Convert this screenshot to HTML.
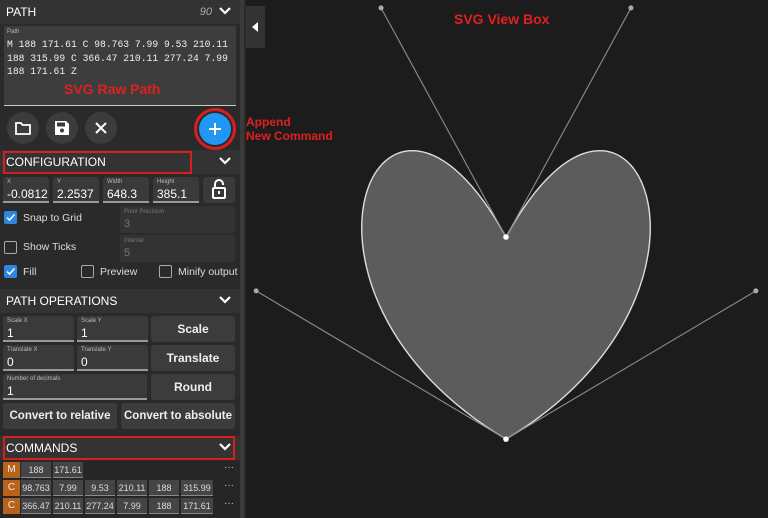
<!DOCTYPE html>
<html><head><style>
*{margin:0;padding:0;box-sizing:border-box}
body{width:768px;height:518px;overflow:hidden;background:#1c1c1c;font-family:"Liberation Sans",sans-serif;color:#fff;position:relative}
.a{position:absolute}
#side{left:0;top:0;width:240px;height:518px;background:#2a2a2a;overflow:hidden}
.hdr{background:#333;height:24px;font-size:12px;line-height:24px;padding-left:6px;width:240px;left:0}
.chev{right:8px;top:4px;width:14px;height:14px}
.inp{background:#3a3a3a;border-bottom:2px solid #999;border-radius:3px 3px 0 0}
.inp .l{font-size:6px;color:#bbb;position:absolute;left:4px;top:2px}
.inp .v{font-size:12px;color:#fff;position:absolute;left:4px;top:10px}
.btn{background:#3c3c3c;border-radius:3px;font-size:12px;font-weight:bold;color:#eee;text-align:center;white-space:nowrap}
.cb{width:13px;height:13px;border:1px solid #aaa;border-radius:2px}
.cb.on{background:#2e86de;border:none}
.lbl{font-size:10.5px;color:#ddd;white-space:nowrap}
.cell{background:#454545;font-size:9px;color:#ddd;text-align:center;height:16px;line-height:16px;border-bottom:1px solid #888}
.cmd{background:#b8621b;font-size:10px;color:#eee;text-align:center;width:17px;height:16px;line-height:16px}
.red{color:#e02020;font-weight:bold}
</style></head><body>
<div id="side" class="a">
<div class="a hdr" style="top:0">PATH<span class="a" style="right:28px;font-style:italic;color:#aaa;font-size:11px">90</span>
<svg class="a chev" viewBox="0 0 14 14"><path d="M2 4l5 5 5-5" stroke="#fff" stroke-width="2.2" fill="none"/></svg></div>
<div class="a" style="left:4px;top:26px;width:232px;height:80px;background:#3d3d3d;border-bottom:1px solid #ccc;overflow:hidden">
<div class="a" style="left:3px;top:3px;font-size:6px;color:#bbb">Path</div>
<div class="a" style="left:3px;top:12px;font-family:'Liberation Mono',monospace;font-size:9.7px;line-height:13.5px;color:#eee;white-space:pre">M 188 171.61 C 98.763 7.99 9.53 210.11
188 315.99 C 366.47 210.11 277.24 7.99
188 171.61 Z</div>
<div class="a red" style="left:60px;top:55px;font-size:14px">SVG Raw Path</div>
</div>
<div class="a" style="left:7px;top:112px;width:32px;height:32px;border-radius:50%;background:#3c3c3c"></div>
<svg class="a" style="left:14px;top:120px" width="18" height="16" viewBox="0 0 18 16"><path d="M2 3h5l1.5 2H16v9H2z" fill="none" stroke="#fff" stroke-width="1.8"/></svg>
<div class="a" style="left:46px;top:112px;width:32px;height:32px;border-radius:50%;background:#3c3c3c"></div>
<svg class="a" style="left:54px;top:120px" width="16" height="16" viewBox="0 0 16 16"><path d="M1 1h11l3 3v11H1z" fill="#fff"/><rect x="3" y="2.5" width="8" height="4" fill="#3c3c3c"/><circle cx="8" cy="10.5" r="2" fill="#3c3c3c"/></svg>
<div class="a" style="left:85px;top:112px;width:32px;height:32px;border-radius:50%;background:#3c3c3c"></div>
<svg class="a" style="left:94px;top:121px" width="14" height="14" viewBox="0 0 14 14"><path d="M2 2l10 10M12 2L2 12" stroke="#fff" stroke-width="2"/></svg>
<div class="a" style="left:194px;top:108px;width:42px;height:42px;border-radius:50%;border:3px solid #d81f1f"></div>
<div class="a" style="left:199px;top:113px;width:32px;height:32px;border-radius:50%;background:#2196f3"></div>
<svg class="a" style="left:207px;top:121px" width="16" height="16" viewBox="0 0 16 16"><path d="M8 2v12M2 8h12" stroke="#fff" stroke-width="2"/></svg>
<div class="a hdr" style="top:150px">CONFIGURATION
<svg class="a chev" viewBox="0 0 14 14"><path d="M2 4l5 5 5-5" stroke="#fff" stroke-width="2.2" fill="none"/></svg></div>
<div class="a" style="left:3px;top:151px;width:189px;height:23px;border:2px solid #d81f1f"></div>
<div class="a inp" style="left:3px;top:177px;width:46px;height:26px"><span class="l">X</span><span class="v">-0.0812</span></div>
<div class="a inp" style="left:53px;top:177px;width:46px;height:26px"><span class="l">Y</span><span class="v">2.2537</span></div>
<div class="a inp" style="left:103px;top:177px;width:46px;height:26px"><span class="l">Width</span><span class="v">648.3</span></div>
<div class="a inp" style="left:153px;top:177px;width:46px;height:26px"><span class="l">Height</span><span class="v">385.1</span></div>
<div class="a" style="left:203px;top:177px;width:32px;height:26px;background:#3a3a3a;border-radius:3px"></div>
<svg class="a" style="left:211px;top:179px" width="16" height="20" viewBox="0 0 16 20"><path d="M4 9V5a4 4 0 0 1 8 0v1" fill="none" stroke="#fff" stroke-width="2"/><rect x="2" y="9" width="12" height="10" rx="1" fill="none" stroke="#fff" stroke-width="2"/><rect x="7" y="12" width="2" height="3" fill="#fff"/></svg>
<div class="a cb on" style="left:4px;top:211px"></div>
<svg class="a" style="left:4px;top:211px" width="13" height="13" viewBox="0 0 13 13"><path d="M3 6.5l2.5 2.5 5-5.5" stroke="#fff" stroke-width="1.5" fill="none"/></svg>
<div class="a lbl" style="left:23px;top:212px">Snap to Grid</div>
<div class="a" style="left:120px;top:206px;width:115px;height:27px;background:#333"><span class="a" style="left:4px;top:3px;font-size:6px;color:#777">Point Precision</span><span class="a" style="left:4px;top:12px;font-size:11px;color:#777">3</span></div>
<div class="a cb" style="left:4px;top:241px"></div>
<div class="a lbl" style="left:23px;top:241px">Show Ticks</div>
<div class="a" style="left:120px;top:235px;width:115px;height:27px;background:#333"><span class="a" style="left:4px;top:3px;font-size:6px;color:#777">Interval</span><span class="a" style="left:4px;top:12px;font-size:11px;color:#777">5</span></div>
<div class="a cb on" style="left:4px;top:265px"></div>
<svg class="a" style="left:4px;top:265px" width="13" height="13" viewBox="0 0 13 13"><path d="M3 6.5l2.5 2.5 5-5.5" stroke="#fff" stroke-width="1.5" fill="none"/></svg>
<div class="a lbl" style="left:23px;top:266px">Fill</div>
<div class="a cb" style="left:81px;top:265px"></div>
<div class="a lbl" style="left:100px;top:266px">Preview</div>
<div class="a cb" style="left:159px;top:265px"></div>
<div class="a lbl" style="left:178px;top:266px">Minify output</div>
<div class="a hdr" style="top:289px">PATH OPERATIONS
<svg class="a chev" viewBox="0 0 14 14"><path d="M2 4l5 5 5-5" stroke="#fff" stroke-width="2.2" fill="none"/></svg></div>
<div class="a inp" style="left:3px;top:316px;width:71px;height:26px"><span class="l">Scale X</span><span class="v">1</span></div>
<div class="a inp" style="left:77px;top:316px;width:71px;height:26px"><span class="l">Scale Y</span><span class="v">1</span></div>
<div class="a btn" style="left:151px;top:316px;width:84px;height:26px;line-height:26px">Scale</div>
<div class="a inp" style="left:3px;top:345px;width:71px;height:26px"><span class="l">Translate X</span><span class="v">0</span></div>
<div class="a inp" style="left:77px;top:345px;width:71px;height:26px"><span class="l">Translate Y</span><span class="v">0</span></div>
<div class="a btn" style="left:151px;top:345px;width:84px;height:26px;line-height:26px">Translate</div>
<div class="a inp" style="left:3px;top:374px;width:144px;height:26px"><span class="l">Number of decimals</span><span class="v">1</span></div>
<div class="a btn" style="left:151px;top:374px;width:84px;height:26px;line-height:26px">Round</div>
<div class="a btn" style="left:3px;top:403px;width:114px;height:26px;line-height:26px;font-size:11.5px">Convert to relative</div>
<div class="a btn" style="left:121px;top:403px;width:114px;height:26px;line-height:26px;font-size:11.5px">Convert to absolute</div>
<div class="a hdr" style="top:436px">COMMANDS
<svg class="a chev" viewBox="0 0 14 14"><path d="M2 4l5 5 5-5" stroke="#fff" stroke-width="2.2" fill="none"/></svg></div>
<div class="a" style="left:3px;top:436px;width:232px;height:24px;border:2px solid #d81f1f"></div>
<div class="a" style="left:0;top:461px;width:240px;height:57px;background:#262626"></div>
<div class="a cmd" style="left:3px;top:462px">M</div>
<div class="a cell" style="left:21px;top:462px;width:30px">188</div>
<div class="a cell" style="left:53px;top:462px;width:30px">171.61</div>
<div class="a" style="left:224px;top:462px;font-size:10px;color:#ccc">···</div>
<div class="a cmd" style="left:3px;top:480px">C</div>
<div class="a" style="left:224px;top:480px;font-size:10px;color:#ccc">···</div>
<div class="a cmd" style="left:3px;top:498px">C</div>
<div class="a" style="left:224px;top:498px;font-size:10px;color:#ccc">···</div>
<div class="a cell" style="left:21px;top:480px;width:30px">98.763</div><div class="a cell" style="left:53px;top:480px;width:30px">7.99</div><div class="a cell" style="left:85px;top:480px;width:30px">9.53</div><div class="a cell" style="left:117px;top:480px;width:30px">210.11</div><div class="a cell" style="left:149px;top:480px;width:30px">188</div><div class="a cell" style="left:181px;top:480px;width:32px">315.99</div>
<div class="a cell" style="left:21px;top:498px;width:30px">366.47</div><div class="a cell" style="left:53px;top:498px;width:30px">210.11</div><div class="a cell" style="left:85px;top:498px;width:30px">277.24</div><div class="a cell" style="left:117px;top:498px;width:30px">7.99</div><div class="a cell" style="left:149px;top:498px;width:30px">188</div><div class="a cell" style="left:181px;top:498px;width:32px">171.61</div>
</div>
<div class="a" style="left:240px;top:0;width:4px;height:518px;background:#3a3a3a"></div>
<div class="a" style="left:244px;top:0;width:2px;height:518px;background:#2a2a2a"></div>
<div class="a" style="left:246px;top:6px;width:19px;height:42px;background:#333"></div>
<svg class="a" style="left:251px;top:21px" width="8" height="12" viewBox="0 0 8 12"><path d="M7 1L1 6l6 5z" fill="#fff"/></svg>
<div class="a red" style="left:246px;top:115px;font-size:12px;line-height:14px">Append<br>New Command</div>
<div class="a red" style="left:454px;top:11px;font-size:14px">SVG View Box</div>
<svg class="a" style="left:0;top:0" width="768" height="518" viewBox="0 0 768 518">
<g transform="translate(242.8,-3.25) scale(1.4)">
<path d="M188 171.61C98.763 7.99 9.53 210.11 188 315.99C366.47 210.11 277.24 7.99 188 171.61Z" fill="#5c5c5c" stroke="#ddd" stroke-width="1"/>
<g stroke="#8a8a8a" stroke-width="0.8" fill="none">
<path d="M188 171.61L98.763 7.99M188 171.61L277.24 7.99M188 315.99L9.53 210.11M188 315.99L366.47 210.11"/></g>
<g fill="#aaa"><circle cx="98.763" cy="7.99" r="1.8"/><circle cx="277.24" cy="7.99" r="1.8"/><circle cx="9.53" cy="210.11" r="1.8"/><circle cx="366.47" cy="210.11" r="1.8"/></g>
<g fill="#fff"><circle cx="188" cy="171.61" r="2"/><circle cx="188" cy="315.99" r="2"/></g>
</g></svg>
</body></html>
